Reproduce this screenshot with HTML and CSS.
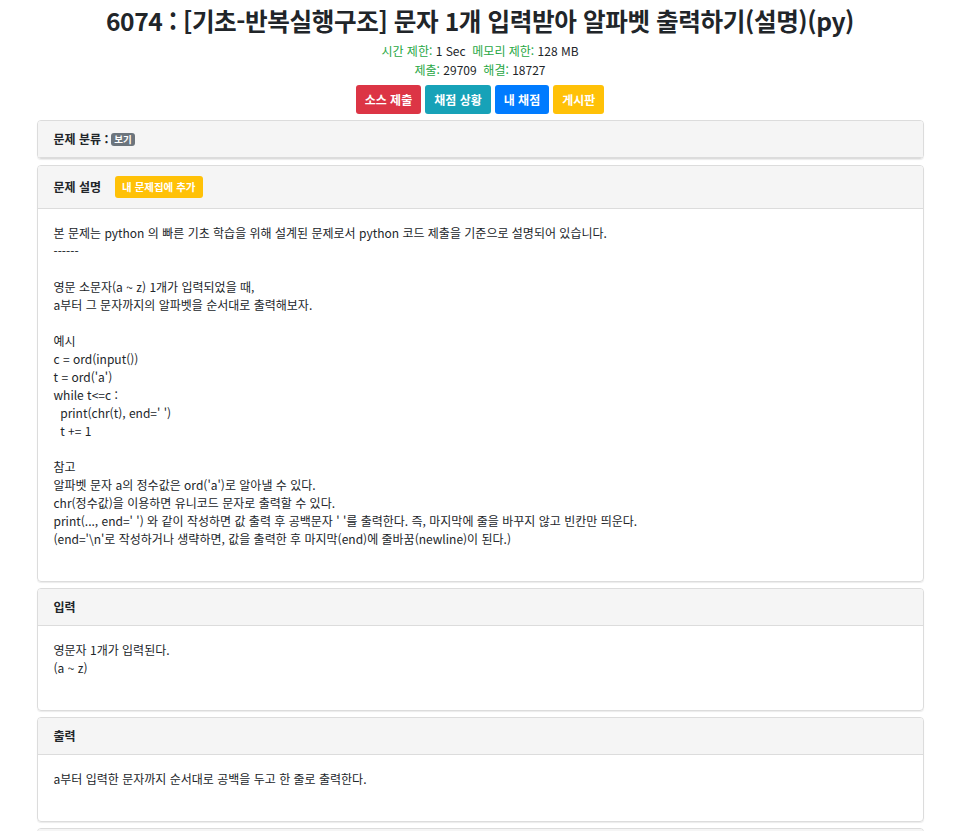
FILE: index.html
```html
<!DOCTYPE html>
<html lang="ko">
<head>
<meta charset="utf-8">
<title>6074</title>
<link rel="stylesheet" href="styles.css">
</head>
<body>
<div class="page">
  <header class="top">
    <h1 class="title">6074 : [기초-반복실행구조] 문자 1개 입력받아 알파벳 출력하기(설명)(py)</h1>
    <div class="meta"><span class="lbl">시간 제한:</span> 1 Sec &nbsp;<span class="lbl">메모리 제한:</span> 128 MB</div>
    <div class="meta"><span class="lbl">제출:</span> 29709 &nbsp;<span class="lbl">해결:</span> 18727</div>
    <div class="actions">
      <a class="btn btn-red">소스 제출</a>
      <a class="btn btn-teal">채점 상황</a>
      <a class="btn btn-blue">내 채점</a>
      <a class="btn btn-yellow">게시판</a>
    </div>
  </header>

  <section class="card">
    <div class="card-head solo">문제 분류 : <span class="badge">보기</span></div>
  </section>

  <section class="card">
    <div class="card-head with-btn">문제 설명 <a class="mini-btn">내 문제집에 추가</a></div>
    <div class="card-body">
      <p>본 문제는 python 의 빠른 기초 학습을 위해 설계된 문제로서 python 코드 제출을 기준으로 설명되어 있습니다.<br>------<br><br>영문 소문자(a ~ z) 1개가 입력되었을 때,<br>a부터 그 문자까지의 알파벳을 순서대로 출력해보자.<br><br>예시<br>c = ord(input())<br>t = ord('a')<br>while t&lt;=c :<br>&nbsp; print(chr(t), end=' ')<br>&nbsp; t += 1<br><br>참고<br>알파벳 문자 a의 정수값은 ord('a')로 알아낼 수 있다.<br>chr(정수값)을 이용하면 유니코드 문자로 출력할 수 있다.<br>print(..., end=' ') 와 같이 작성하면 값 출력 후 공백문자 ' '를 출력한다. 즉, 마지막에 줄을 바꾸지 않고 빈칸만 띄운다.<br>(end='\n'로 작성하거나 생략하면, 값을 출력한 후 마지막(end)에 줄바꿈(newline)이 된다.)</p>
    </div>
  </section>

  <section class="card">
    <div class="card-head">입력</div>
    <div class="card-body">
      <p>영문자 1개가 입력된다.<br>(a ~ z)</p>
    </div>
  </section>

  <section class="card">
    <div class="card-head">출력</div>
    <div class="card-body">
      <p>a부터 입력한 문자까지 순서대로 공백을 두고 한 줄로 출력한다.</p>
    </div>
  </section>

  <section class="card">
    <div class="card-head empty"></div>
  </section>
</div>
</body>
</html>
```

FILE: styles.css
```css
* { box-sizing: border-box; }
html, body { margin: 0; padding: 0; background: #fff; }
body {
  font-family: "Noto Sans CJK KR", "Noto Sans", sans-serif;
  color: #212529;
  font-size: 12px;
  line-height: 18px;
}
.page {
  width: 888px;
  margin: 0 auto;
  padding-left: 1px;
}
.top { text-align: center; padding-top: 2px; }
.title {
  margin: 0 0 3px;
  font-size: 24.6px;
  line-height: 36px;
  font-weight: 700;
  color: #212529;
  letter-spacing: -0.4px;
}
.meta { font-size: 12px; line-height: 19px; }
.lbl { color: #28a745; }
.actions {
  display: flex;
  justify-content: center;
  gap: 4px;
  margin-top: 6px;
  margin-bottom: 6px;
}
.btn {
  display: inline-block;
  height: 29px;
  line-height: 29px;
  padding: 0 9px;
  border-radius: 3px;
  color: #fff;
  font-weight: 700;
  font-size: 12px;
}
.btn-red { background: #dc3545; }
.btn-teal { background: #17a2b8; }
.btn-blue { background: #007bff; }
.btn-yellow { background: #ffc107; }
.card {
  border: 1px solid #dcdcdc;
  border-radius: 4px;
  margin-bottom: 6px;
  box-shadow: 0 1px 1px rgba(0,0,0,0.08);
  overflow: hidden;
}
.card-head {
  background: #f5f5f5;
  border-bottom: 1px solid #dcdcdc;
  padding: 9px 16px 9px;
  font-weight: 700;
  font-size: 12px;
  line-height: 18px;
  display: flex;
  align-items: center;
}
.card-head.solo { padding-top: 9px; padding-bottom: 9px; }
.card-head.with-btn { padding-top: 10px; padding-bottom: 10px; }
.card-head.empty { height: 37px; }
.badge {
  display: inline-block;
  background: #6c757d;
  color: #fff;
  font-size: 9.5px;
  line-height: 13px;
  padding: 0 3px;
  border-radius: 3px;
  margin-left: 3px;
}
.mini-btn {
  display: inline-block;
  background: #ffc107;
  color: #fff;
  font-size: 10.5px;
  line-height: 22px;
  padding: 0 7px;
  border-radius: 3px;
  margin-left: 14px;
}
.card-body { padding: 15px 16px 1px; }
.card-body p { margin: 0 0 32px; }
```
